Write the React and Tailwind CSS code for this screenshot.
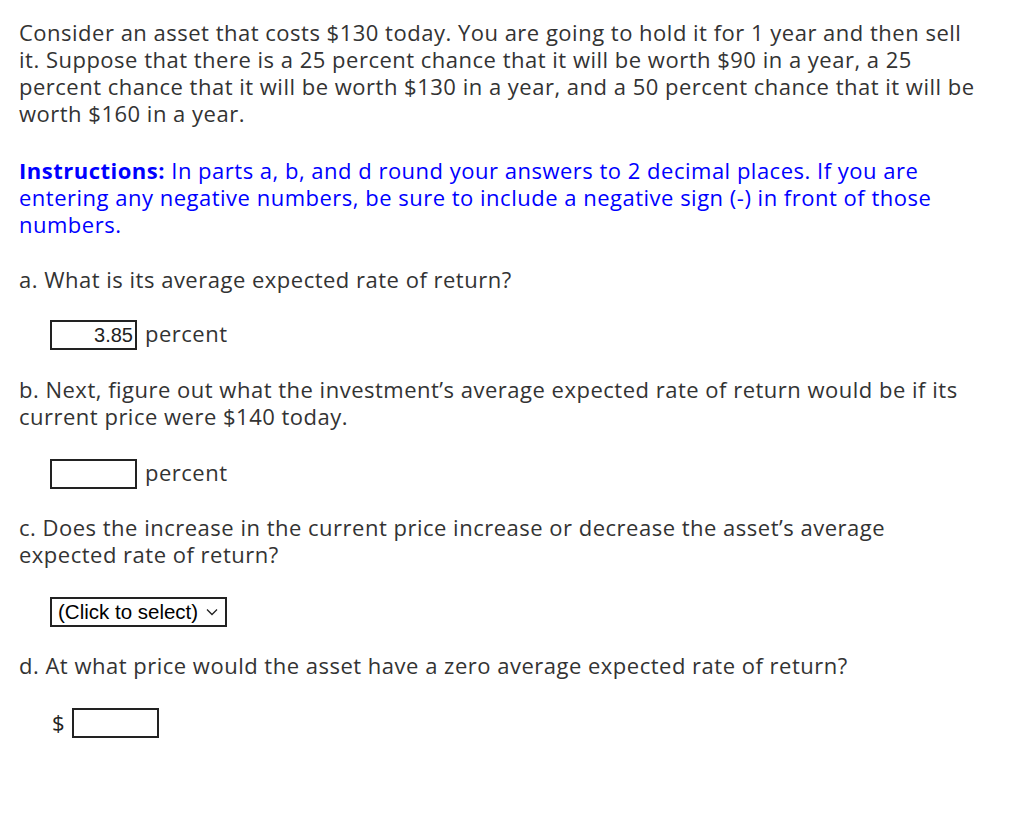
import React from "react";

function AnswerBox({ value = "", className = "" }) {
  return (
    <div
      className={`flex h-[30px] w-[87px] items-center justify-end border-2 border-[#222] bg-white pr-[2px] text-[20px] leading-none tracking-normal text-[#222] ${className}`}
      style={{ fontFamily: '"Liberation Sans", Arial, sans-serif' }}
    >
      {value}
    </div>
  );
}

export default function App() {
  return (
    <div
      className="min-h-[831px] w-[1024px] bg-white pl-[19px] pt-[19px] text-[22px] leading-[27px] tracking-[0.5px] text-[#333]"
      style={{ fontFamily: '"Open Sans", Lato, sans-serif' }}
    >
      <p>
        Consider an asset that costs $130 today. You are going to hold it for 1 year and then sell
        <br />
        it. Suppose that there is a 25 percent chance that it will be worth $90 in a year, a 25
        <br />
        percent chance that it will be worth $130 in a year, and a 50 percent chance that it will be
        <br />
        worth $160 in a year.
      </p>

      <p className="mt-[30px] text-[#0000ff]">
        <span className="font-bold">Instructions:</span> In parts a, b, and d round your answers to 2 decimal places. If you are
        <br />
        entering any negative numbers, be sure to include a negative sign (-) in front of those
        <br />
        numbers.
      </p>

      <p className="mt-[28px]">a. What is its average expected rate of return?</p>
      <div className="mt-[27px] flex items-center gap-[8px] pl-[31px]">
        <AnswerBox value="3.85" />
        <span className="-mt-[3px]">percent</span>
      </div>

      <p className="mt-[26px]">
        b. Next, figure out what the investment’s average expected rate of return would be if its
        <br />
        current price were $140 today.
      </p>
      <div className="mt-[29px] flex items-center gap-[8px] pl-[31px]">
        <AnswerBox />
        <span className="-mt-[3px]">percent</span>
      </div>

      <p className="mt-[25px]">
        c. Does the increase in the current price increase or decrease the asset’s average
        <br />
        expected rate of return?
      </p>
      <div className="mt-[29px] pl-[31px]">
        <div
          className="flex h-[30px] w-[177px] items-center gap-[8px] border-2 border-[#222] bg-white pl-[6px] text-[20.5px] leading-none tracking-normal text-black"
          style={{ fontFamily: '"Liberation Sans", Arial, sans-serif' }}
        >
          <span>(Click to select)</span>
          <svg width="12" height="8" viewBox="0 0 12 8" fill="none" stroke="#222" strokeWidth="1.3">
            <path d="M1 1.5 L6 6.5 L11 1.5" />
          </svg>
        </div>
      </div>

      <p className="mt-[25px]">d. At what price would the asset have a zero average expected rate of return?</p>
      <div className="mt-[29px] flex items-center gap-[7px] pl-[33px]">
        <span className="-mt-[2px] text-[#222]">$</span>
        <AnswerBox />
      </div>
    </div>
  );
}
